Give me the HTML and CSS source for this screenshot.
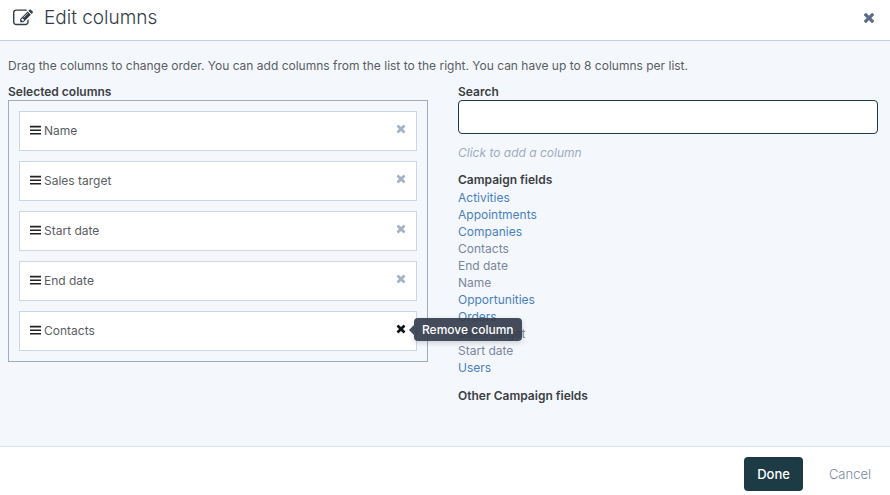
FILE: index.html
```
<!DOCTYPE html>
<html lang="en">
<head>
<meta charset="utf-8" />
<meta name="viewport" content="width=device-width, initial-scale=1" />
<title>Edit columns</title>
<link rel="stylesheet" href="styles.css">
</head>

<body>
<svg class="sprite" aria-hidden="true">
	<symbol id="times" viewBox="192 256 1408 1408"><path d="M1490 1322q0 40-28 68l-136 136q-28 28-68 28t-68-28l-294-294-294 294q-28 28-68 28t-68-28l-136-136q-28-28-28-68t28-68l294-294-294-294q-28-28-28-68t28-68l136-136q28-28 68-28t68 28l294 294 294-294q28-28 68-28t68 28l136 136q28 28 28 68t-28 68l-294 294 294 294q28 28 28 68z"/></symbol>
	<symbol id="bars" viewBox="0 0 11 10"><path d="M0 .8h11v1.6H0zM0 4.4h11v1.6H0zM0 8h11v1.6H0z"/></symbol>
</svg>
<div class="modal">
	<header class="header">
		<svg class="icon-edit" viewBox="0 0 1792 1792" aria-hidden="true"><path d="M888 1184l116-116-152-152-116 116v56h96v96h56zm440-720q-16-16-33 1l-350 350q-17 17-1 33t33-1l350-350q17-17 1-33zm80 594v190q0 119-84.5 203.5t-203.5 84.5h-832q-119 0-203.5-84.5t-84.5-203.5v-832q0-119 84.5-203.5t203.5-84.5h832q63 0 117 25 15 7 18 23 3 17-9 29l-49 49q-14 14-32 8-23-6-45-6h-832q-66 0-113 47t-47 113v832q0 66 47 113t113 47h832q66 0 113-47t47-113v-126q0-13 9-22l64-64q15-15 35-7t20 29zm-96-738l288 288-672 672h-288v-288zm444 132l-92 92-288-288 92-92q28-28 68-28t68 28l152 152q28 28 28 68t-28 68z"/></svg>
		<h1>Edit columns</h1>
		<button type="button" class="close" aria-label="Close"><svg><use href="#times"/></svg></button>
	</header>
	<main class="content">
		<p class="intro">Drag the columns to change order. You can add columns from the list to the right. You can have up to 8 columns per list.</p>
		<div class="columns">
			<section>
				<h2>Selected columns</h2>
				<ul class="selected">
					<li><svg class="handle"><use href="#bars"/></svg>Name<button type="button" class="remove" aria-label="Remove column"><svg><use href="#times"/></svg></button></li>
					<li><svg class="handle"><use href="#bars"/></svg>Sales target<button type="button" class="remove" aria-label="Remove column"><svg><use href="#times"/></svg></button></li>
					<li><svg class="handle"><use href="#bars"/></svg>Start date<button type="button" class="remove" aria-label="Remove column"><svg><use href="#times"/></svg></button></li>
					<li><svg class="handle"><use href="#bars"/></svg>End date<button type="button" class="remove" aria-label="Remove column"><svg><use href="#times"/></svg></button></li>
					<li><svg class="handle"><use href="#bars"/></svg>Contacts<button type="button" class="remove active" aria-describedby="tip"><svg><use href="#times"/></svg><span class="tooltip" id="tip" role="tooltip">Remove column</span></button></li>
				</ul>
			</section>
			<section>
				<label class="label" for="search">Search</label>
				<input type="text" id="search" class="search" />
				<p class="hint">Click to add a column</p>
				<h2>Campaign fields</h2>
				<ul class="fields">
					<li><a href="#">Activities</a></li>
					<li><a href="#">Appointments</a></li>
					<li><a href="#">Companies</a></li>
					<li>Contacts</li>
					<li>End date</li>
					<li>Name</li>
					<li><a href="#">Opportunities</a></li>
					<li><a href="#">Orders</a></li>
					<li>Sales target</li>
					<li>Start date</li>
					<li><a href="#">Users</a></li>
				</ul>
				<h2>Other Campaign fields</h2>
			</section>
		</div>
	</main>
	<footer class="footer">
		<button type="button" class="done">Done</button>
		<button type="button" class="cancel">Cancel</button>
	</footer>
</div>
</body>
</html>
```
FILE: styles.css
```
*{box-sizing:border-box;}
body{margin:0; font:400 12px/17px Inter, "Liberation Sans", sans-serif; color:#5a5d62; background:#fff;}
h1, h2, p, ul{margin:0; padding:0;}
ul{list-style:none;}
button{font:inherit; border:none; background:none; padding:0; cursor:pointer;}
svg{display:block; fill:currentColor;}
.sprite{display:none;}
.modal{min-height:100vh; display:flex; flex-direction:column;}

.header{display:flex; align-items:center; height:41px; padding:0 15px 4px 13px; border-bottom:1px solid #c5cdd8; color:#343b4a;}
.header h1{flex:1; font-size:19px; line-height:24px; font-weight:300;}
.icon-edit{width:20px; height:20px; margin-right:11px;}
.close{color:#5c6b86;}
.close svg{width:12px; height:12px;}

.content{flex:1; padding:16px 12px 16px 8px; background:#f4f8fc;}
.intro{margin-bottom:9px;}
.columns{display:grid; grid-template-columns:1fr 1fr; gap:30px;}
h2, .label{display:block; font-size:12px; line-height:17px; font-weight:600; color:#3c3f44;}
.selected{display:grid; gap:10px; padding:10px; border:1px solid #9eacc3;}
.selected li{display:flex; align-items:center; height:40px; padding:0 10px 2px; background:#fff; border:1px solid #ccd6e0;}
.handle{width:11px; height:10px; margin-right:3px; color:#222;}
.remove{position:relative; margin-left:auto; padding-bottom:2px; color:#a5b1c8;}
.remove svg{width:10px; height:10px;}
.remove.active{color:#10141c;}
.tooltip{position:absolute; left:18px; bottom:-5px; padding:3px 8px; border-radius:4px; background:rgba(52,60,76,.92); color:#fff; font-weight:500; line-height:17px; white-space:nowrap; box-shadow:0 2px 5px rgba(40,50,70,.2);}
.tooltip:before{content:""; position:absolute; right:100%; top:7px; border:5px solid transparent; border-left:none; border-right-color:rgba(52,60,76,.92);}

.search{display:block; width:100%; height:34px; padding:0 10px; border:1px solid #1d3b45; border-radius:4px; background:#fff; font:inherit; outline:none;}
.hint{margin:10px 0; color:#9eabc0; font-style:italic;}
.fields{margin:1px 0 11px; color:#7b869c;}
.fields a{color:#4a80c3; text-decoration:none;}

.footer{display:flex; align-items:center; justify-content:flex-end; gap:26px; padding:10px 19px 4px; border-top:1px solid #d9e4ec;}
.done{height:34px; padding:0 13px; border-radius:4px; background:#1d3b45; color:#fff; font-size:13px; font-weight:500;}
.cancel{color:#7b879d; font-size:13px; font-weight:300;}
```
